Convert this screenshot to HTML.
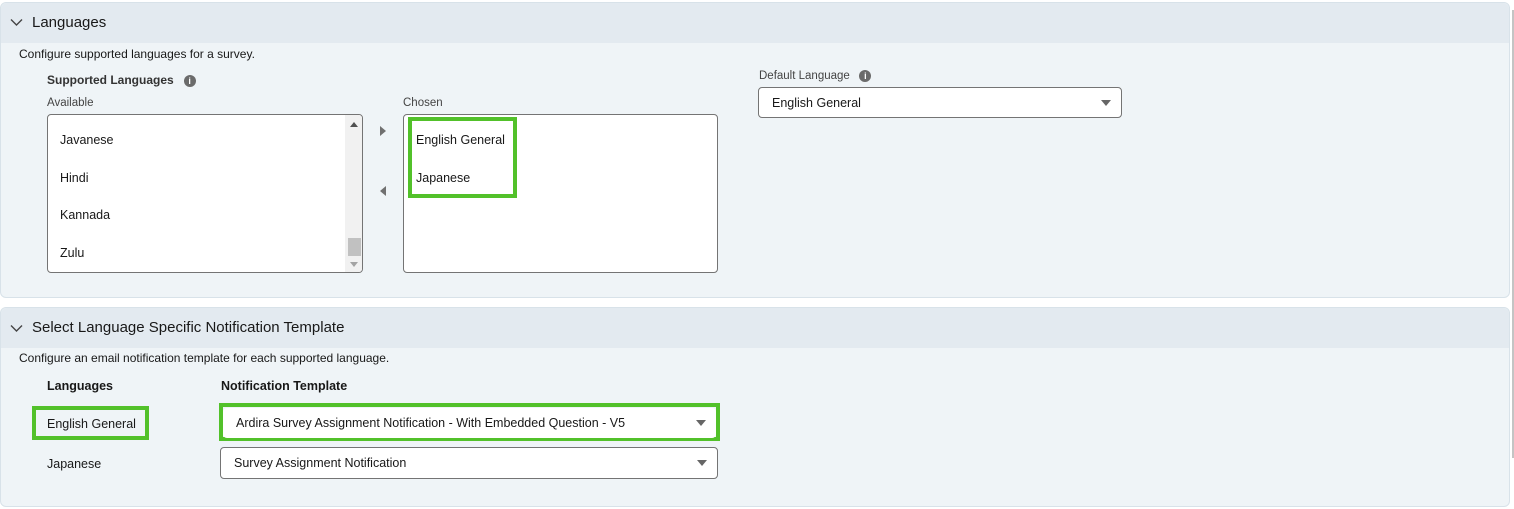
<!DOCTYPE html>
<html><head><meta charset="utf-8"><style>
*{box-sizing:border-box;margin:0;padding:0}
body{width:1514px;height:509px;background:#fff;font-family:"Liberation Sans",sans-serif;color:#181818;position:relative;overflow:hidden;font-size:12px}
.a{position:absolute}
.panel{position:absolute;left:0;width:1510px;background:#eff4f7;border:1px solid #d8e2e9;border-radius:6px}
.hdr{position:absolute;left:0;top:0;right:0;height:40px;background:#e3eaf0;border-radius:6px 6px 0 0;font-size:15px;color:#181818}
.box{background:#fff;border:1px solid #747474;border-radius:4px}
.sel{background:#fff;border:1px solid #747474;border-radius:4px;font-size:12.5px;padding-left:13px;display:flex;align-items:center}
.tri{position:absolute;right:10px;top:50%;margin-top:-3px;width:0;height:0;border-left:5px solid transparent;border-right:5px solid transparent;border-top:6px solid #666}
.green{border:4px solid #52c12a}
.info{display:inline-block;width:12px;height:12px;border-radius:50%;background:#6b6b6b;color:#fff;font-size:9px;font-weight:bold;text-align:center;line-height:12px;vertical-align:middle}
</style></head><body>
<div class="panel" style="top:2px;height:296px">
 <div class="hdr"><svg class="a" style="left:9px;top:15px" width="13" height="9"><path d="M1 1.5L6.5 7L12 1.5" fill="none" stroke="#444" stroke-width="1.4"/></svg><span class="a" style="left:31px;top:11px">Languages</span></div>
</div>
<div class="a" style="left:19px;top:47px;font-size:12px">Configure supported languages for a survey.</div>
<div class="a" style="left:47px;top:73px;font-weight:bold;font-size:12px;color:#333">Supported Languages&nbsp;&nbsp;&nbsp;<span class="info">i</span></div>
<div class="a" style="left:47px;top:97px;font-size:11.5px;color:#444">Available</div>
<div class="a" style="left:403px;top:97px;font-size:11.5px;color:#444">Chosen</div>
<div class="a box" style="left:47px;top:114px;width:316px;height:159px;overflow:hidden">
 <div class="a" style="left:12px;top:18px;font-size:12.5px">Javanese</div>
 <div class="a" style="left:12px;top:56px;font-size:12.5px">Hindi</div>
 <div class="a" style="left:12px;top:93px;font-size:12.5px">Kannada</div>
 <div class="a" style="left:12px;top:131px;font-size:12.5px">Zulu</div>
 <div class="a" style="left:297px;top:0;width:18px;height:159px;background:#f1f1f1"></div>
 <div class="a" style="left:300px;top:123px;width:13px;height:18px;background:#c1c1c1"></div>
 <div class="a" style="left:302px;top:7px;border-left:4px solid transparent;border-right:4px solid transparent;border-bottom:5px solid #505050"></div>
 <div class="a" style="left:302px;top:147px;border-left:4px solid transparent;border-right:4px solid transparent;border-top:5px solid #a3a3a3"></div>
</div>
<div class="a" style="left:380px;top:126px;border-top:5px solid transparent;border-bottom:5px solid transparent;border-left:6px solid #707070"></div>
<div class="a" style="left:380px;top:186px;border-top:5px solid transparent;border-bottom:5px solid transparent;border-right:6px solid #707070"></div>
<div class="a box" style="left:403px;top:114px;width:315px;height:159px"></div>
<div class="a green" style="left:408px;top:117px;width:109px;height:81px"></div>
<div class="a" style="left:416px;top:133px;font-size:12.5px">English General</div>
<div class="a" style="left:416px;top:171px;font-size:12.5px">Japanese</div>
<div class="a" style="left:759px;top:70px;font-size:11.5px;color:#444">Default Language&nbsp;&nbsp;&nbsp;<span class="info">i</span></div>
<div class="a sel" style="left:758px;top:87px;width:364px;height:31px">English General<span class="tri"></span></div>

<div class="panel" style="top:307px;height:200px">
 <div class="hdr"><svg class="a" style="left:9px;top:16px" width="13" height="9"><path d="M1 1.5L6.5 7L12 1.5" fill="none" stroke="#444" stroke-width="1.4"/></svg><span class="a" style="left:31px;top:11px">Select Language Specific Notification Template</span></div>
</div>
<div class="a" style="left:19px;top:351px;font-size:12px">Configure an email notification template for each supported language.</div>
<div class="a" style="left:47px;top:379px;font-weight:bold;font-size:12.5px">Languages</div>
<div class="a" style="left:221px;top:379px;font-weight:bold;font-size:12.5px">Notification Template</div>
<div class="a green" style="left:32px;top:406px;width:117px;height:34px"></div>
<div class="a" style="left:47px;top:417px;font-size:12.5px">English General</div>
<div class="a green" style="left:219px;top:403px;width:501px;height:38px"></div>
<div class="a sel" style="left:223px;top:408px;width:493px;height:30px;border:none">Ardira Survey Assignment Notification - With Embedded Question - V5<span class="tri"></span></div>
<div class="a" style="left:47px;top:457px;font-size:12.5px">Japanese</div>
<div class="a sel" style="left:220px;top:447px;width:498px;height:32px">Survey Assignment Notification<span class="tri"></span></div>
<div class="a" style="left:1512px;top:10px;width:2px;height:448px;background:#c4c4c4"></div>
</body></html>
